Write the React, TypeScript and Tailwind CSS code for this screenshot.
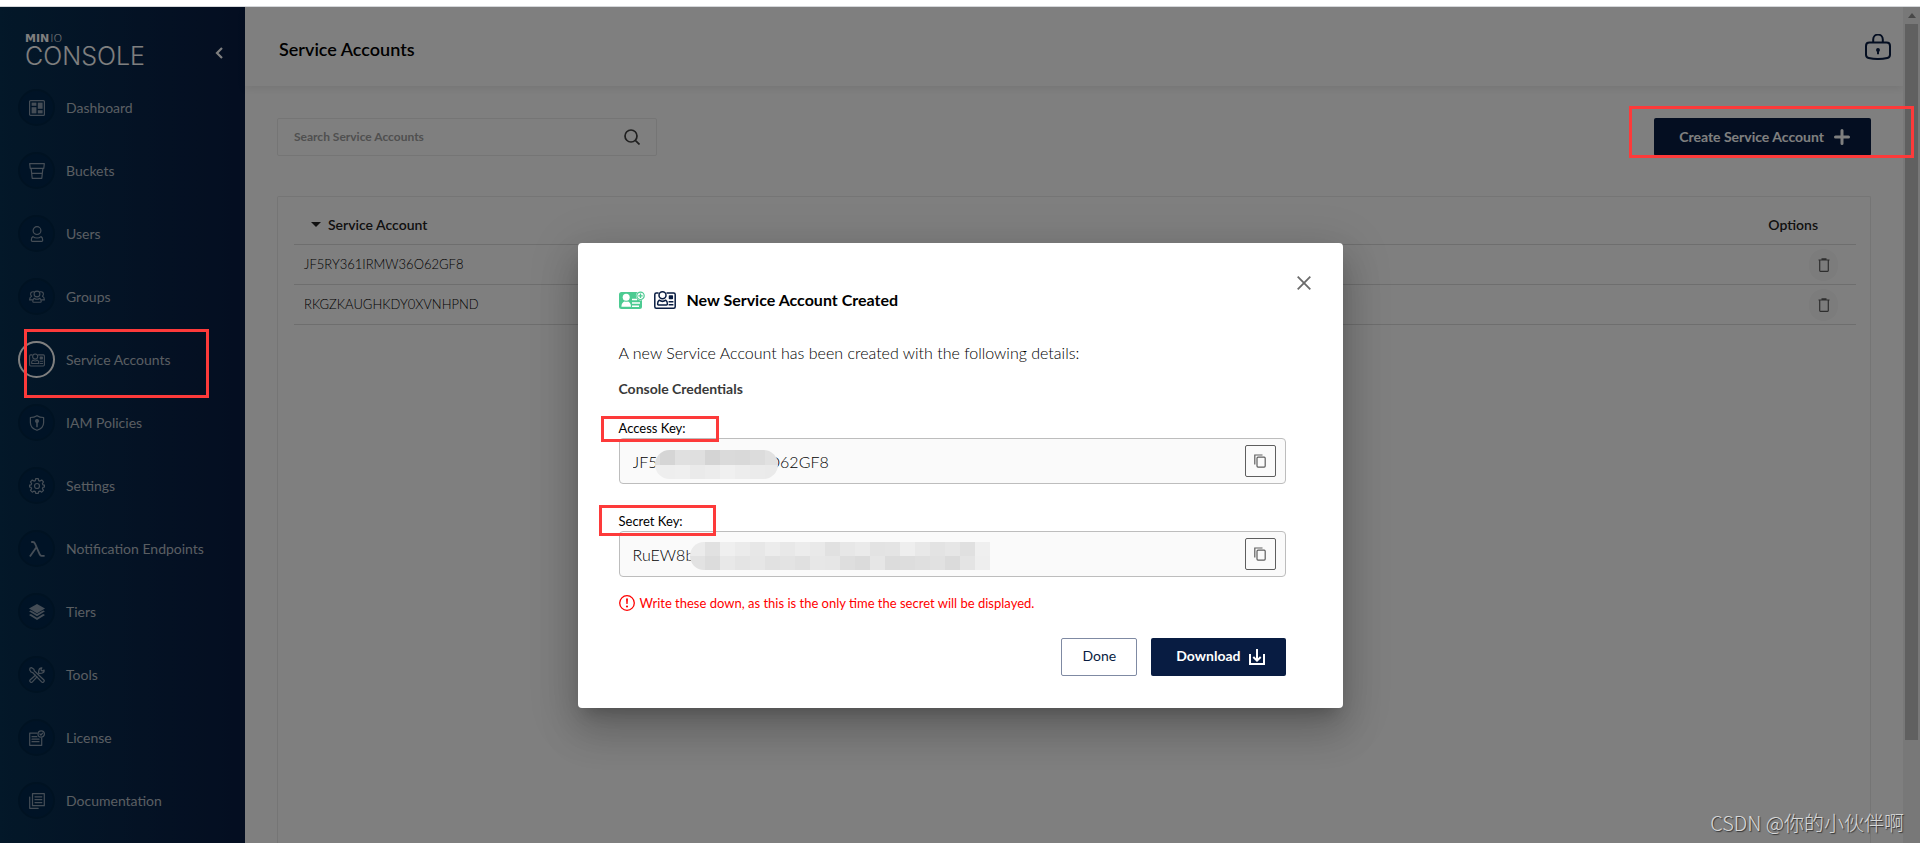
import React from "react";

type IconProps = { className?: string };

const stroke = { fill: "none", stroke: "currentColor", strokeWidth: 1.2, strokeLinejoin: "round", strokeLinecap: "round" } as const;

const DashboardIcon = ({ className }: IconProps) => (
  <svg className={className} viewBox="0 0 16 16" {...stroke}>
    <rect x=".6" y=".6" width="14.8" height="14.8" rx="1" />
    <g fill="currentColor" stroke="none">
      <rect x="2.600" y="2.600" width="4.800" height="3.200" />
      <rect x="8.800" y="2.600" width="4.800" height="6.200" />
      <rect x="2.600" y="7.200" width="4.800" height="6.200" />
      <rect x="8.800" y="10.200" width="4.800" height="3.200" />
    </g>
  </svg>
);
const BucketIcon = ({ className }: IconProps) => (
  <svg className={className} viewBox="0 0 16 16" {...stroke}>
    <path d="M.7.7h14.6l-.5 4.600h-.9l-1.100 10H3.200l-1.100-10h-.9zM2 5.300h12M2.700 10.300h10.600" />
  </svg>
);
const UserIcon = ({ className }: IconProps) => (
  <svg className={className} viewBox="0 0 16 16" {...stroke}>
    <circle cx="8" cy="4.6" r="3.9" />
    <path d="M4 10.6C2.8 11.200 2.300 12.500 2.300 14.200c0 .7.4 1.100 1.100 1.100h9.200c.7 0 1.100-.4 1.100-1.100 0-1.700-.5-3-1.700-3.600-1 .9-2.300 1.400-4 1.400s-3-.5-4-1.400z" />
  </svg>
);
const GroupIcon = ({ className }: IconProps) => (
  <svg className={className} viewBox="0 0 16 16" {...stroke} strokeWidth={1.1}>
    <circle cx="8" cy="5" r="2.900" />
    <path d="M5.200 9.200c-1 .6-1.400 1.700-1.400 3.200 0 .5.300.9.900.9h6.600c.6 0 .9-.4.9-.9 0-1.500-.4-2.600-1.400-3.200-1.600 1.200-4 1.200-5.600 0z" />
    <path d="M4.600 2.800C2.800 2.300 1.500 3.600 1.600 5.200c0 .8.400 1.500 1 2C1.200 7.700.6 9 .6 10.900h2.800M11.400 2.800c1.800-.5 3.100.8 3 2.400 0 .8-.4 1.500-1 2 1.400.5 2 1.800 2 3.700h-2.800" />
  </svg>
);
const AccountIcon = ({ className }: IconProps) => (
  <svg className={className} viewBox="0 0 22 18" fill="none" stroke="currentColor" strokeWidth="1.500" strokeLinejoin="round">
    <path d="M4.600 2H2.300C1.300 2 .8 2.600.8 3.500v12.200c0 .9.6 1.500 1.500 1.500h17.400c.9 0 1.500-.6 1.500-1.500V3.500c0-.9-.6-1.500-1.500-1.500h-7.200" />
    <circle cx="8.500" cy="4.300" r="3.500" />
    <path d="M5.300 9.200C4.200 9.900 3.600 11.200 3.600 13c0 .6.3.9.9.9h8c.6 0 .9-.3.900-.9 0-1.800-.6-3.100-1.700-3.800-1.900 1.400-4.500 1.400-6.400 0z" />
    <rect x="15.500" y="5" width="2.800" height="2.400" fill="currentColor" />
    <path d="M14.600 10.800h4.800M14.600 13.800h4.800" />
  </svg>
);
const PolicyIcon = ({ className }: IconProps) => (
  <svg className={className} viewBox="0 0 16 16" {...stroke}>
    <path d="M8 .7C6 2 3.800 2.500 1.400 2.500v5.300c0 3.700 2.600 6.200 6.600 7.500 4-1.300 6.600-3.800 6.600-7.500V2.500C12.200 2.500 10 2 8 .7z" />
    <circle cx="8" cy="6" r="1.400" fill="currentColor" />
    <path d="M8 7v4.600" strokeWidth="1.600" />
  </svg>
);
const SettingsIcon = ({ className }: IconProps) => (
  <svg className={className} viewBox="0 0 16 16" {...stroke}>
    <path d="M6.700.7h2.600l.4 1.900 1.300.5 1.700-1.100 1.800 1.800-1.100 1.700.5 1.300 1.500.3v1.900l-1.500.4-.5 1.300 1.100 1.700-1.800 1.800-1.700-1.100-1.300.5-.4 1.700H6.700l-.4-1.700-1.300-.5-1.700 1.100-1.800-1.800 1.100-1.700-.5-1.300-1.500-.4V7.100l1.500-.3.500-1.300-1.100-1.700L3.300 2 5 3.100l1.300-.5z" />
    <circle cx="8" cy="8" r="2.500" />
  </svg>
);
const LambdaIcon = ({ className }: IconProps) => (
  <svg className={className} viewBox="0 0 16 16" fill="none" stroke="currentColor" strokeWidth="1.800">
    <path d="M2.200 1h1.600c1.200 0 1.800.6 2.300 1.800l4.500 10.400c.5 1.200 1 1.700 2 1.700h3M7.400 6.200.900 15.400" />
  </svg>
);
const TiersIcon = ({ className }: IconProps) => (
  <svg className={className} viewBox="0 0 16 16" fill="currentColor">
    <path d="M8 0 16 4.600 8 9.200 0 4.600z" />
    <path d="M0 7.300 1.900 6.600 8 10.100l6.100-3.500 1.900.7-8 4.900zM0 11 1.900 10 8 13.800 14.100 10l1.900 1-8 5z" />
  </svg>
);
const ToolsIcon = ({ className }: IconProps) => (
  <svg className={className} viewBox="0 0 16 16" {...stroke}>
    <path d="M6.400 8.200 1.300 12.700a1.500 1.500 0 0 0 2.100 2.200L8 9.900M9.500 6.200l.4-3c.3-1.400 1.500-2.500 3-2.400l-1 2 1.200 1.200 2-.9c.2 1.500-.9 2.800-2.300 3l-2.600.3" />
    <path d="M1 1.200 2.700.7l2.200 1.500.3 1.500 9.500 9a1.500 1.500 0 0 1-2.100 2.200L3.600 5.500l-1.400-.3L.7 3z" />
  </svg>
);
const LicenseIcon = ({ className }: IconProps) => (
  <svg className={className} viewBox="0 0 16 16" {...stroke}>
    <path d="M8 3.200H.7v12.100h12V8M3 6.700h4.800M3 9.200h7M3 11.700h7" />
    <circle cx="12.200" cy="4" r="3.200" />
    <path d="m10.900 4 1 1 1.700-1.900" />
  </svg>
);
const DocsIcon = ({ className }: IconProps) => (
  <svg className={className} viewBox="0 0 16 16" {...stroke}>
    <path d="M3.500.7h11.800v12H3.500zM.7 4v11.300h8.500M6 3.800h6.800M6 6.700h6.800M6 9.600h6.800" />
  </svg>
);
const LockIcon = ({ className }: IconProps) => (
  <svg className={className} viewBox="0 0 26 26" fill="none" stroke="currentColor" strokeWidth="2">
    <path d="M8.200 8.600V5.400a4.800 4.800 0 0 1 9.600 0v3.200" />
    <path d="M4.500 8.600h17c2.200 0 3.500 1.300 3.500 3.300v8.800c0 1.800-.9 2.900-2.700 3.300-6 1.300-12.600 1.300-18.600 0C1.900 23.600 1 22.500 1 20.700v-8.800c0-2 1.300-3.300 3.500-3.300z" />
    <circle cx="13" cy="16" r="1.200" fill="currentColor" strokeWidth="1.500" />
    <path d="M13 16v4.200" />
  </svg>
);
const SearchIcon = ({ className }: IconProps) => (
  <svg className={className} viewBox="0 0 16 16" fill="none" stroke="currentColor" strokeWidth="1.700">
    <circle cx="7" cy="7" r="6" />
    <path d="m11.300 11.300 4.200 4.200" />
  </svg>
);
const TrashIcon = ({ className }: IconProps) => (
  <svg className={className} viewBox="0 0 12 14" fill="none" stroke="currentColor" strokeWidth="1.200">
    <path d="M.5 2h11M1.700 2v10.600c0 .5.200.8.700.8h7.200c.5 0 .7-.3.700-.8V2M3.500.8h5" />
  </svg>
);
const CopyIcon = ({ className }: IconProps) => (
  <svg className={className} viewBox="0 0 12 14" fill="none" stroke="currentColor" strokeWidth="1.200">
    <path d="M.8 10.500V1h7.700" />
    <rect x="3" y="3.200" width="8.200" height="9.900" rx="1" />
  </svg>
);
const CreatedIcon = ({ className }: IconProps) => (
  <svg className={className} viewBox="0 0 26 18">
    <rect x="0" y="1" width="23" height="17" rx="2.500" fill="#4ccb92" />
    <circle cx="7.200" cy="6.200" r="3.500" fill="#fff" />
    <path d="M2.400 15.800c0-3 1.500-4.900 2.800-5.400 1.200.6 2.800.6 4 0 1.300.5 2.800 2.400 2.800 5.400z" fill="#fff" />
    <path d="M13 8.500h5M13 12h8M13 15.200h7" stroke="#fff" strokeWidth="1.400" />
    <circle cx="21.500" cy="4.800" r="4.600" fill="#fff" />
    <circle cx="21.500" cy="4.800" r="3.700" fill="#fff" stroke="#4ccb92" strokeWidth="1.200" />
    <path d="M21.500 2.600V7M19.300 4.800h4.400" stroke="#4ccb92" strokeWidth="1.300" />
  </svg>
);
const WarningIcon = ({ className }: IconProps) => (
  <svg className={className} viewBox="0 0 16 16">
    <circle cx="8" cy="8" r="7.300" fill="none" stroke="currentColor" strokeWidth="1.300" />
    <path d="M7 3.500h2l-.4 5.400H7.400z" fill="currentColor" />
    <circle cx="8" cy="11.500" r="1.100" fill="currentColor" />
  </svg>
);
const DownloadIcon = ({ className }: IconProps) => (
  <svg className={className} viewBox="0 0 16 16" fill="none" stroke="currentColor" strokeWidth="2">
    <path d="M1 5v10h14V5M8 0v11.500M4.300 8 8 11.600 11.700 8" />
  </svg>
);

const navItems = [
  { label: "Dashboard", Icon: DashboardIcon },
  { label: "Buckets", Icon: BucketIcon },
  { label: "Users", Icon: UserIcon },
  { label: "Groups", Icon: GroupIcon },
  { label: "Service Accounts", Icon: AccountIcon, active: true },
  { label: "IAM Policies", Icon: PolicyIcon },
  { label: "Settings", Icon: SettingsIcon },
  { label: "Notification Endpoints", Icon: LambdaIcon },
  { label: "Tiers", Icon: TiersIcon },
  { label: "Tools", Icon: ToolsIcon },
  { label: "License", Icon: LicenseIcon },
  { label: "Documentation", Icon: DocsIcon },
];

const accounts = ["JF5RY361IRMW36O62GF8", "RKGZKAUGHKDY0XVNHPND"];

function Sidebar() {
  return (
    <aside className="w-[245px] shrink-0 bg-linear-to-r from-[#073052] to-[#081c42]">
      <div className="flex h-[82px] items-start justify-between pl-[25px] pr-[22px] pt-[26px]">
        <div className="text-white">
          <div className="flex gap-px font-['DejaVu_Sans',sans-serif] text-[11px] leading-3">
            <span className="font-bold">MIN</span>
            <span className="font-extralight">IO</span>
          </div>
          <div className="font-[Inter,sans-serif] text-[25px] font-light leading-[22px]">CONSOLE</div>
        </div>
        <button type="button" aria-label="Collapse menu" className="mt-[14px] text-white">
          <svg className="h-3 w-2" viewBox="0 0 8 12" fill="none" stroke="currentColor" strokeWidth="2.200">
            <path d="M7 1 2 6l5 5" />
          </svg>
        </button>
      </div>
      <nav className="flex flex-col gap-[26px] pl-[18px]">
        {navItems.map(({ label, Icon, active }) => (
          <a key={label} href="#" className="flex h-[37px] items-center gap-[11px] text-sm text-[#b4bcc4]">
            <span
              className={
                active
                  ? "flex size-[37px] items-center justify-center rounded-full border-2 border-white bg-[#00274d] text-[#8a9bad]"
                  : "flex size-[37px] items-center justify-center rounded-full border-2 border-[#002544] bg-[#00274d] text-[#8a9bad]"
              }
            >
              <Icon className="size-4" />
            </span>
            {label}
          </a>
        ))}
      </nav>
    </aside>
  );
}

function Main() {
  return (
    <main className="flex min-w-0 flex-1 flex-col">
      <header className="flex h-[79px] items-center justify-between bg-white pl-[34px] pr-3 shadow-[0_3px_8px_rgba(0,0,0,0.08)]">
        <h1 className="mt-1 text-lg font-semibold text-black">Service Accounts</h1>
        <button type="button" aria-label="Lock">
          <LockIcon className="size-[26px] text-[#081c42]" />
        </button>
      </header>
      <div className="flex flex-1 flex-col px-8 pt-8">
        <div className="flex items-start justify-between">
          <div className="flex h-[38px] w-[380px] items-center rounded-xs border border-[#eaeaea] pl-4 pr-4">
            <input
              aria-label="Search Service Accounts"
              placeholder="Search Service Accounts"
              className="min-w-0 flex-1 bg-transparent text-xs font-bold outline-none placeholder:text-[#a0a0a0]"
            />
            <SearchIcon className="size-4 text-[#404040]" />
          </div>
          <button type="button" className="flex h-[38px] items-center gap-[10px] rounded-xs bg-[#081c42] pl-[25px] pr-[21px] text-sm font-bold text-white">
            Create Service Account
            <svg className="size-4" viewBox="0 0 16 16" stroke="currentColor" strokeWidth="3" strokeLinecap="round">
              <path d="M8 1.500v13M1.500 8h13" />
            </svg>
          </button>
        </div>
        <section className="mt-10 flex-1 rounded-t-xs border border-b-0 border-[#eaeaea] py-[7px] pl-4 pr-[14px]">
          <table className="w-full border-collapse text-[#222]">
            <thead className="text-sm">
              <tr className="h-10 border-b border-[#dcdcdc]">
                <th className="pl-[17px] pt-[2px] text-left font-semibold">
                  <span className="flex items-center gap-[7px]">
                    <svg className="h-[5px] w-[10px]" viewBox="0 0 10 5" fill="currentColor">
                      <path d="M0 0h10L5 5z" />
                    </svg>
                    Service Account
                  </span>
                </th>
                <th className="w-[105px] pr-[38px] pt-[2px] text-right font-semibold">Options</th>
              </tr>
            </thead>
            <tbody className="text-[13px]">
              {accounts.map((key) => (
                <tr key={key} className="h-10 border-b border-[#dcdcdc]">
                  <td className="pl-[10px] pt-[2px] font-light text-black">{key}</td>
                  <td className="pr-[18px] pt-[2px]">
                    <button type="button" aria-label={"Delete " + key} className="ml-auto flex h-8 w-[29px] items-center justify-center rounded-full bg-[#f8f8f8] text-[#5c5c5c]">
                      <TrashIcon className="h-[14px] w-3" />
                    </button>
                  </td>
                </tr>
              ))}
            </tbody>
          </table>
        </section>
      </div>
    </main>
  );
}

const accessMosaic = [
  ["bg-[#dedede]", "bg-[#d5d5d5]", "bg-[#e0e0e0]", "bg-[#dfdfdf]", "bg-[#d4d4d4]", "bg-[#dadada]", "bg-[#d9d9d9]", "bg-[#dcdcdc]", "bg-[#e1e1e1]", "bg-[#dddddd]"],
  ["bg-[#efefef]", "bg-[#eeeeee]", "bg-[#efefef]", "bg-[#eaeaea]", "bg-[#ececec]", "bg-[#f0f0f0]", "bg-[#ededed]", "bg-[#ebebeb]", "bg-[#eaeaea]", "bg-[#e8e8e8]"],
];
const secretMosaic = [
  ["bg-[#ebebeb]", "bg-[#e1e1e1]", "bg-[#efefef]", "bg-[#ebebeb]", "bg-[#e7e7e7]", "bg-[#ececec]", "bg-[#e8e8e8]", "bg-[#ececec]", "bg-[#e9e9e9]", "bg-[#e1e1e1]", "bg-[#e7e7e7]", "bg-[#eaeaea]", "bg-[#e3e3e3]", "bg-[#e4e4e4]", "bg-[#eeeeee]", "bg-[#e8e8e8]", "bg-[#e3e3e3]", "bg-[#e6e6e6]", "bg-[#e0e0e0]", "bg-[#efefef]"],
  ["bg-[#e2e2e2]", "bg-[#dcdcdc]", "bg-[#e8e8e8]", "bg-[#e4e4e4]", "bg-[#e6e6e6]", "bg-[#e1e1e1]", "bg-[#e3e3e3]", "bg-[#e0e0e0]", "bg-[#e7e7e7]", "bg-[#e6e6e6]", "bg-[#dedede]", "bg-[#dbdbdb]", "bg-[#e6e6e6]", "bg-[#dcdcdc]", "bg-[#dddddd]", "bg-[#dfdfdf]", "bg-[#e1e1e1]", "bg-[#dbdbdb]", "bg-[#e4e4e4]", "bg-[#eeeeee]"],
];

function Mosaic({ rows, className }: { rows: string[][]; className: string }) {
  return (
    <div aria-hidden="true" className={className}>
      {rows.map((row, r) => (
        <div key={r} className="flex flex-1">
          {row.map((tone, c) => (
            <span key={c} className={"w-[15px] shrink-0 " + tone} />
          ))}
        </div>
      ))}
    </div>
  );
}

function KeyField({ id, label, value, children }: { id: string; label: string; value: string; children: React.ReactNode }) {
  return (
    <div className="relative flex flex-col">
      <label htmlFor={id} className="h-[21px] text-[13px] leading-[22px] text-black">
        {label}
      </label>
      <div className="relative flex h-[46px] items-center rounded-sm border border-[#bdbdbd] bg-[#fafafa] pl-[13px] pr-[9px]">
        <input id={id} readOnly value={value} className="min-w-0 flex-1 bg-transparent pt-[2px] font-light text-black outline-none" />
        <button type="button" aria-label={"Copy " + label} className="flex h-8 w-[31px] items-center justify-center rounded-xs border border-[#5e5e5e] text-[#5e5e5e]">
          <CopyIcon className="h-[14px] w-3" />
        </button>
      </div>
      {children}
    </div>
  );
}

function CreatedDialog() {
  return (
    <div
      role="dialog"
      aria-label="New Service Account Created"
      className="relative w-full max-w-[765px] rounded-sm bg-white pb-8 pl-[41px] pr-[57px] pt-[45px] shadow-[0_11px_15px_-7px_rgba(0,0,0,0.2),0_24px_38px_3px_rgba(0,0,0,0.14),0_9px_46px_8px_rgba(0,0,0,0.12)]"
    >
      <button type="button" aria-label="Close" className="absolute right-8 top-[33px] text-[#6b6b6b]">
        <svg className="size-[14px]" viewBox="0 0 14 14" stroke="currentColor" strokeWidth="1.800">
          <path d="m.7.700 12.600 12.600M13.300.7.700 13.300" />
        </svg>
      </button>
      <div className="flex h-6 items-center">
        <CreatedIcon className="h-[18px] w-[26px]" />
        <AccountIcon className="ml-[9px] h-[18px] w-[22px] text-[#081c42]" />
        <h2 className="ml-[11px] text-base font-bold text-black">New Service Account Created</h2>
      </div>
      <p className="mt-[29px] font-light leading-6 text-black">A new Service Account has been created with the following details:</p>
      <h3 className="mt-3 text-sm font-bold leading-6 text-[#393939]">Console Credentials</h3>
      <div className="mt-4 flex flex-col gap-[26px]">
        <KeyField id="access-key" label="Access Key:" value="JF5RY361IRMW36O62GF8">
          <Mosaic rows={accessMosaic} className="absolute left-9 top-[33px] flex h-[29px] w-[123px] flex-col overflow-hidden rounded-full [&_span:first-child]:w-[5px]" />
          <div className="absolute -left-[18px] -top-[1px] h-[26px] w-[118px] border-3 border-[#fd3a3a]" />
        </KeyField>
        <KeyField id="secret-key" label="Secret Key:" value="RuEW8b">
          <Mosaic rows={secretMosaic} className="absolute left-[71px] top-8 flex h-7 w-[300px] flex-col overflow-hidden rounded-l-full" />
          <div className="absolute -left-5 -top-[5px] h-[31px] w-[117px] border-3 border-[#fd3a3a]" />
        </KeyField>
      </div>
      <p className="mt-4 flex items-center gap-[5px] text-[13px] leading-5 text-[#ff0000]">
        <WarningIcon className="size-4" />
        Write these down, as this is the only time the secret will be displayed.
      </p>
      <div className="mt-[25px] flex justify-end gap-[14px] text-sm">
        <button type="button" className="h-[38px] w-[76px] rounded-xs border border-[#7f8aa3] pb-[2px] text-[#081c42]">
          Done
        </button>
        <button type="button" className="flex h-[38px] items-center gap-2 rounded-xs bg-[#081c42] pl-[25px] pr-[21px] font-bold text-white">
          <span className="pb-[2px]">Download</span>
          <DownloadIcon className="size-4" />
        </button>
      </div>
    </div>
  );
}

export default function App() {
  return (
    <div className="relative flex h-screen flex-col overflow-hidden bg-white font-[Lato,'Noto_Sans_CJK_SC',sans-serif]">
      <div className="h-[7px] shrink-0 border-b border-[#d5d7da] bg-white" />
      <div className="relative flex min-h-0 flex-1">
        <div className="flex min-w-0 flex-1 overflow-hidden">
          <Sidebar />
          <Main />
        </div>
        <div aria-hidden="true" className="flex w-[17px] shrink-0 flex-col items-center bg-[#f1f1f1]">
          <svg className="my-[6px] h-[5px] w-2 text-[#909090]" viewBox="0 0 8 5" fill="currentColor">
            <path d="M0 5h8L4 0z" />
          </svg>
          <div className="h-[716px] w-[13px] bg-[#c1c1c1]" />
        </div>
        <div className="absolute inset-0 flex items-start justify-center bg-black/50 pt-[236px]">
          <CreatedDialog />
        </div>
      </div>
      <div className="absolute left-6 top-[329px] h-[69px] w-[185px] border-3 border-[#fd3a3a]" />
      <div className="absolute right-[6px] top-[106px] h-[52px] w-[285px] border-3 border-[#fd3a3a]" />
      <p className="absolute bottom-[6px] right-4 font-['Noto_Sans_CJK_SC',sans-serif] text-xl font-light leading-7 text-[#d8d8d8] [text-shadow:1px_1px_1px_#333]">
        CSDN @你的小伙伴啊
      </p>
    </div>
  );
}
